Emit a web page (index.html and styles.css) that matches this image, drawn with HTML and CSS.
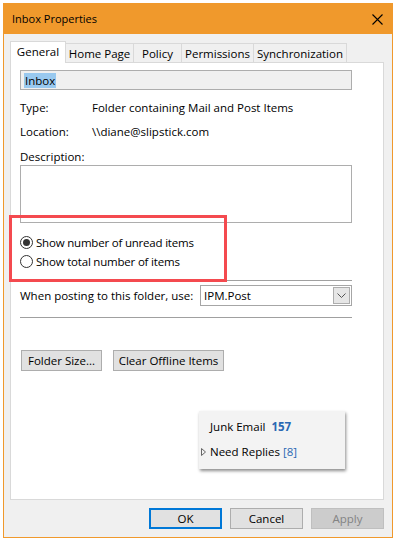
FILE: index.html
```html
<!DOCTYPE html>
<html>
<head>
<meta charset="utf-8">
<link rel="stylesheet" href="styles.css">
</head>
<body>
<div class="window">
  <div class="titlebar">
    <span class="title">Inbox Properties</span>
    <svg class="close" width="11" height="11" viewBox="0 0 11 11"><path d="M0.5 0.5 L10.5 10.5 M10.5 0.5 L0.5 10.5" stroke="#000" stroke-width="1.1" fill="none"/></svg>
  </div>
  <div class="body">
    <div class="tabs">
      <div class="tab active t-general">General</div>
      <div class="tab t-home">Home Page</div>
      <div class="tab t-policy">Policy</div>
      <div class="tab t-perm">Permissions</div>
      <div class="tab t-sync">Synchronization</div>
    </div>
    <div class="panel">
      <div class="field"><span class="sel">Inbox</span></div>
      <div class="row"><span class="label">Type:</span><span>Folder containing Mail and Post Items</span></div>
      <div class="row"><span class="label">Location:</span><span>\\diane@slipstick.com</span></div>
      <div class="desc-label">Description:</div>
      <div class="desc-box"></div>
      <div class="radios">
        <div class="radio-row"><span class="radio checked"></span>Show number of unread items</div>
        <div class="radio-row"><span class="radio"></span>Show total number of items</div>
      </div>
      <div class="sep"></div>
      <div class="post-row">
        <span>When posting to this folder, use:</span>
        <div class="select">
          <span class="select-text">IPM.Post</span>
          <span class="arrow"><svg width="9" height="5" viewBox="0 0 9 5"><path d="M0.5 0.5 L4.5 4.5 L8.5 0.5" stroke="#555" stroke-width="1" fill="none"/></svg></span>
        </div>
      </div>
      <div class="sep sep2"></div>
      <div class="btn-row">
        <div class="btn b-size">Folder Size...</div>
        <div class="btn b-clear">Clear Offline Items</div>
      </div>
      <div class="highlight"></div>
      <div class="popup">
        <div class="pop-row"><span>Junk Email</span><span class="count">157</span></div>
        <div class="pop-row pop-row2"><svg class="tri" width="5" height="8" viewBox="0 0 5 8"><path d="M0.5 0.5 L4.5 4 L0.5 7.5 Z" stroke="#666" stroke-width="1" fill="none"/></svg><span>Need Replies</span><span class="bracket">[8]</span></div>
      </div>
    </div>
    <div class="footer">
      <div class="btn ok">OK</div>
      <div class="btn">Cancel</div>
      <div class="btn disabled">Apply</div>
    </div>
  </div>
</div>
</body>
</html>
```

FILE: styles.css
```css
* { box-sizing: border-box; }
html, body { margin: 0; padding: 0; background: #fff; }
body {
  font-family: "Open Sans", "Noto Sans", "Liberation Sans", sans-serif;
  font-size: 11.5px;
  color: #000;
}
.window {
  margin: 3px 0 0 3px;
  width: 390px;
  border: 1px solid #f0992c;
  border-top: none;
  background: #f0f0f0;
}
.titlebar {
  height: 31px;
  background: #f0992c;
  display: flex;
  align-items: center;
  justify-content: space-between;
  padding: 0 10px 0 9px;
  margin: 0 -1px;
}
.title { font-size: 11px; }
.close { display: block; margin-top: 1px; }
.body { padding: 7px 8px 8px 6px; }
.tabs {
  display: flex;
  align-items: flex-end;
  height: 21px;
}
.tab {
  height: 19px;
  border: 1px solid #d9d9d9;
  border-bottom: none;
  background: #f0f0f0;
  display: flex;
  align-items: center;
  justify-content: center;
  margin-left: -1px;
  padding-top: 1px;
}
.tab.active {
  height: 22px;
  margin-left: 0;
  margin-bottom: -1px;
  background: #fff;
  position: relative;
  z-index: 1;
  padding-top: 0;
  padding-bottom: 2px;
}
.t-general { width: 56px; }
.t-home { width: 69px; }
.t-policy { width: 49px; }
.t-perm { width: 73px; }
.t-sync { width: 94px; }
.panel {
  position: relative;
  width: 374px;
  height: 438px;
  background: #fff;
  border: 1px solid #d9d9d9;
  padding: 7px 0 0 9px;
}
.field {
  width: 332px;
  height: 20px;
  border: 1px solid #adadad;
  background: #f0f0f0;
  padding: 2px 0 0 3px;
}
.sel {
  display: inline-block;
  background: #99c9ef;
  height: 15px;
  line-height: 15px;
  padding: 0 1px;
}
.row {
  height: 24px;
  line-height: 24px;
  display: flex;
}
.field + .row { margin-top: 6px; }
.label { width: 72px; }
.desc-label {
  margin-top: 5px;
  height: 16px;
  line-height: 16px;
}
.desc-box {
  width: 332px;
  height: 58px;
  border: 1px solid #adadad;
  background: #fff;
}
.radios { margin-top: 10px; }
.radio-row {
  height: 19px;
  display: flex;
  align-items: center;
  letter-spacing: -0.2px;
}
.radio {
  width: 13px;
  height: 13px;
  border: 1px solid #333;
  border-radius: 50%;
  margin-right: 3px;
  display: flex;
  align-items: center;
  justify-content: center;
  flex: none;
}
.radio.checked::after {
  content: "";
  width: 7px;
  height: 7px;
  border-radius: 50%;
  background: #333;
}
.sep {
  width: 332px;
  height: 1px;
  background: #a0a0a0;
  margin-top: 9px;
}
.post-row {
  margin-top: 4px;
  width: 332px;
  display: flex;
  align-items: center;
  justify-content: space-between;
}
.select {
  width: 152px;
  height: 21px;
  border: 1px solid #a6a6a6;
  background: #fff;
  display: flex;
  align-items: center;
  justify-content: space-between;
  padding-left: 3px;
}
.arrow {
  width: 17px;
  height: 17px;
  margin-right: 1px;
  border: 1px solid #adadad;
  background: #e6e6e6;
  display: flex;
  align-items: center;
  justify-content: center;
}
.arrow svg { display: block; }
.sep2 { margin-top: 11px; }
.btn-row {
  margin-top: 32px;
  display: flex;
  gap: 11px;
  padding-left: 1px;
}
.btn {
  height: 21px;
  border: 1px solid #adadad;
  background: #e1e1e1;
  display: flex;
  align-items: center;
  justify-content: center;
}
.b-size { width: 81px; }
.b-clear { width: 111px; }
.highlight {
  position: absolute;
  left: -2px;
  top: 152px;
  width: 218px;
  height: 67px;
  border: 3px solid #f44a4f;
}
.popup {
  position: absolute;
  left: 188px;
  top: 348px;
  width: 146px;
  height: 58px;
  background: #f3f3f3;
  box-shadow: 1px 2px 3px rgba(0,0,0,0.45);
  padding: 8px 0 0 0;
}
.pop-row {
  height: 16px;
  line-height: 16px;
  display: flex;
  align-items: center;
  padding-left: 11px;
}
.pop-row2 { margin-top: 9px; padding-left: 2px; }
.tri { display: block; margin-right: 4px; }
.count {
  color: #2a68b3;
  font-weight: bold;
  margin-left: 6px;
}
.bracket { color: #2a68b3; margin-left: 3px; }
.footer {
  margin-top: 8px;
  display: flex;
  justify-content: flex-end;
  gap: 8px;
}
.footer .btn { width: 73px; }
.btn.ok { border: 2px solid #0078d7; }
.btn.disabled { background: #cccccc; border-color: #bfbfbf; color: #838383; }
```
